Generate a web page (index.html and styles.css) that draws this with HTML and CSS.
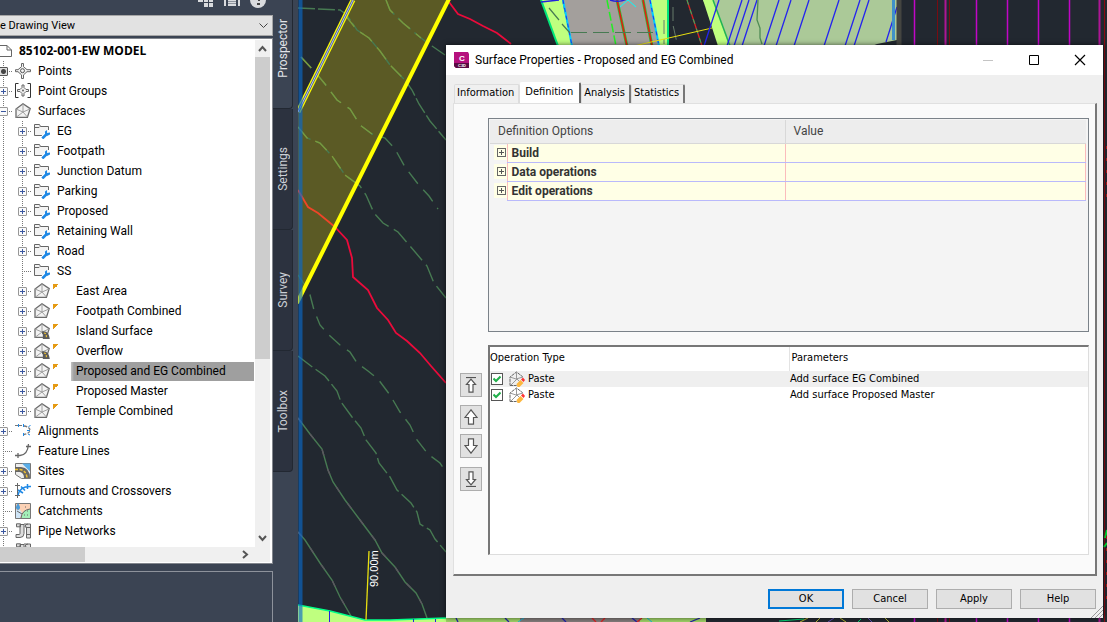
FILE: index.html
```html
<!DOCTYPE html>
<html lang="en">
<head>
<meta charset="utf-8">
<title>Surface Properties - Proposed and EG Combined</title>
<link rel="stylesheet" href="styles.css">
</head>
<body>
<svg class="defs" aria-hidden="true">
  <defs>
    <symbol id="surface" viewBox="0 0 16 16">
      <path d="M8 .8 1 6v8.400h11.400L15.200 5.600z" fill="#f3f3f3" stroke="#6b6b6b" stroke-width="1.300"/>
      <path d="M8 1v8M1 6l7 3 7-3M1.500 14 8 9l4.400 5" fill="none" stroke="#a0a0a0"/>
    </symbol>
    <symbol id="road-surface" viewBox="0 0 16 16">
      <use href="#surface"/>
      <path d="M8 8.500c5-1 7 2 7.800 7.500h-7c0-3 .5-5-.8-5.500z" fill="#5c5c5c"/>
      <path d="M10 10c2 0 2.500 2 2.500 6" fill="none" stroke="#f2c230" stroke-width="1.200" stroke-dasharray="2 1.500"/>
    </symbol>
    <symbol id="folder" viewBox="0 0 16 16">
      <path d="M.5 12.500v-11h5l1 2h8v9z" fill="#f3f3f3"/>
      <path d="M14.500 7V3.500h-8l-1-2h-5v11H8M1 4.500h4l1-1" fill="none" stroke="#666"/>
      <path d="M7.500 15.800 13 10.500" stroke="#fff" stroke-width="4"/>
      <path d="M8.300 15.500 13.200 10.500" stroke="#1e88e5" stroke-width="2.600"/>
      <path d="M11 8.500 13 7v3l3-.5v2L13 13l-2-1.500z" fill="#1e88e5"/>
    </symbol>
    <symbol id="point" viewBox="0 0 16 16">
      <path d="M6.500.5h2v3.200l3.500 3h3.500v2H12l-3.500 3.200v3.600h-2v-3.600L3 8.700H.5v-2H3l3.500-3z" fill="#f2f2f2" stroke="#666"/>
      <circle cx="7.500" cy="7.700" r="2" fill="none" stroke="#555"/>
    </symbol>
    <symbol id="point-group" viewBox="0 0 16 16">
      <path d="M3.500.5h-3v14h3M12.500.5h3v14h-3" fill="none" stroke="#333"/>
      <path d="M7 2h2v2.500l2 2h2.500v2H11l-2 2V13H7v-2.500l-2-2H2.500v-2H5l2-2z" fill="#eee" stroke="#666"/>
      <circle cx="8" cy="7.500" r="1" fill="#666"/>
    </symbol>
    <symbol id="doc" viewBox="0 0 12 12">
      <path d="M-4 .5H7L11.500 5v6.500H-4z" fill="#fff" stroke="#666"/><path d="M7 .5V5h4.500" fill="none" stroke="#666"/>
    </symbol>
    <symbol id="alignment" viewBox="0 0 16 16">
      <path d="M0 2.500h8" stroke="#777" stroke-dasharray="3 1"/>
      <path d="M9 3c8 1 8 7 0 8.500" fill="none" stroke="#777" stroke-width="1.300" stroke-dasharray="3 1.500"/>
      <path d="M3.500 1v3M8.500 1v3M13.500 4l2-2M12 7.500h3M13 11l2 1M8.500 10v3" stroke="#1e88e5"/>
    </symbol>
    <symbol id="feature" viewBox="0 0 16 16">
      <path d="M0 12.500h5C11 12 13 8 13.500 1M3 10v5M11 3.500h5" fill="none" stroke="#666" stroke-width="1.300"/>
    </symbol>
    <symbol id="site" viewBox="0 0 16 16">
      <path d="M.5.5h15v15h-9l-6-4z" fill="#eee" stroke="#777"/><path d="M7 .5h8v8z" fill="#5aaee8"/>
      <path d="M0 4h6q9 1 9 11H9q0-5-4-6H0z" fill="#666"/><path d="M0 6.500h5q6 1 7 8" fill="none" stroke="#f2c230" stroke-width="1.500" stroke-dasharray="3 1.500"/>
    </symbol>
    <symbol id="turnout" viewBox="0 0 16 16">
      <path d="M2.500 0v15M0 2.500h5M0 12.500h5" stroke="#666"/>
      <path d="M3 12Q5 3 16 3.500M3 7l5 3M6 3.500l4 4M12.500 1v5" fill="none" stroke="#1e88e5" stroke-width="1.500"/>
    </symbol>
    <symbol id="catchment" viewBox="0 0 16 16">
      <path d="M.5.5h15v15H.5z" fill="#fbd1b5" stroke="#777"/><path d="M6 15 9 8l6-2v9z" fill="#a3efb8"/>
      <path d="M1 7h4l2 3-2 5H1z" fill="#cfe5f7"/><path d="M6 15q1-8 9-9M2 8l5 3" fill="none" stroke="#666"/>
      <path d="M3 0Q7 6 3 7-1 6 3 0z" fill="#4b9bd8"/><path d="M10 4h1M12 8h1M9 12h1M12 12h1" stroke="#666"/>
    </symbol>
    <symbol id="pipe" viewBox="0 0 16 16">
      <path d="M1.500.8h4v3h-4zM5 1.500h4v9q0 4-4 4H1v-3h3q1 0 1-1zM10 4q0-3 3-3h2.500v14h-4V4z" fill="#ddd" stroke="#666"/>
      <path d="M11 4.500h4M11 11.500h4M9 1h4" stroke="#666"/>
    </symbol>
    <symbol id="edit-surface" viewBox="0 0 16 16">
      <path d="M1 14.500V6l6.500-5L14 6M1 14.500h7" fill="none" stroke="#666" stroke-dasharray="3 .6"/>
      <path d="M7.500 1v7M1 6l6 2 7-2M2 14l6-6 3 3" fill="none" stroke="#999"/>
      <path d="m7.500 13 4-4 3 3-4 4h-2z" fill="#fdb73e"/><path d="m12 8.500 2-2 2 2.500-1.500 2z" fill="#f33"/>
    </symbol>
    <symbol id="arrow-up" viewBox="0 0 14 16">
      <path d="M7 .8 1 8.500h3.500v6.700h5V8.500H13z" fill="#fff" stroke="#555" stroke-width="1.200"/>
    </symbol>
    <symbol id="arrow-top" viewBox="0 0 14 16">
      <path d="M2 .5h10" stroke="#555" stroke-width="1.200"/>
      <path d="M7 2.200 2.500 7.500H5v7.700h4V7.500h2.500z" fill="#fff" stroke="#555" stroke-width="1.200"/>
    </symbol>
  </defs>
</svg>

<main class="app">
  <aside class="palette">
    <div class="palette-main">
      <div class="toolbar">
        <svg width="16" height="8" aria-hidden="true"><path d="M0 0h5v2H0zM6 3h4v4H6zM11 3h4v4h-4zM6 0h4v2H6zM11 0h4v2h-4z" fill="#d9dbde"/></svg>
        <svg width="16" height="8" aria-hidden="true"><path d="M0 6V0h2v6zM14 6V0h2v6zM4 0h8v6H4z" fill="#d9dbde"/><path d="M4 1.500h8M4 3.500h8" stroke="#8d939d"/></svg>
        <svg width="17" height="9" aria-hidden="true"><path d="M0 0a8 8 0 0 0 16 0z" fill="#d9dbde"/><path d="M7 4h3M8 0h2" stroke="#444" stroke-width="2"/></svg>
      </div>
      <select class="view-select" aria-label="View"><option>e Drawing View</option></select>
      <section class="tree-box">
        <div class="tree-row">
          <nav class="tree" aria-label="Drawing items">
            <div class="node root"><svg class="doc"><use href="#doc"/></svg><b>85102-001-EW MODEL</b></div>
            <ul class="branch">
              <li class="node"><button class="exp dot" aria-label="Points"></button><i class="link"></i><svg class="ico"><use href="#point"/></svg><span>Points</span></li>
              <li class="node"><button class="exp" aria-label="Expand"></button><i class="link"></i><svg class="ico"><use href="#point-group"/></svg><span>Point Groups</span></li>
              <li>
                <div class="node"><button class="exp minus" aria-label="Collapse"></button><i class="link"></i><svg class="ico"><use href="#surface"/></svg><span>Surfaces</span></div>
                <ul class="branch sub">
                  <li class="node"><button class="exp" aria-label="Expand"></button><i class="link"></i><svg class="ico"><use href="#folder"/></svg><span>EG</span></li>
                  <li class="node"><button class="exp" aria-label="Expand"></button><i class="link"></i><svg class="ico"><use href="#folder"/></svg><span>Footpath</span></li>
                  <li class="node"><button class="exp" aria-label="Expand"></button><i class="link"></i><svg class="ico"><use href="#folder"/></svg><span>Junction Datum</span></li>
                  <li class="node"><button class="exp" aria-label="Expand"></button><i class="link"></i><svg class="ico"><use href="#folder"/></svg><span>Parking</span></li>
                  <li class="node"><button class="exp" aria-label="Expand"></button><i class="link"></i><svg class="ico"><use href="#folder"/></svg><span>Proposed</span></li>
                  <li class="node"><button class="exp" aria-label="Expand"></button><i class="link"></i><svg class="ico"><use href="#folder"/></svg><span>Retaining Wall</span></li>
                  <li class="node"><button class="exp" aria-label="Expand"></button><i class="link"></i><svg class="ico"><use href="#folder"/></svg><span>Road</span></li>
                  <li class="node"><i class="link leaf"></i><svg class="ico"><use href="#folder"/></svg><span>SS</span></li>
                  <li class="node"><button class="exp" aria-label="Expand"></button><i class="link"></i><svg class="ico"><use href="#surface"/></svg><i class="flag"></i><span>East Area</span></li>
                  <li class="node"><button class="exp" aria-label="Expand"></button><i class="link"></i><svg class="ico"><use href="#surface"/></svg><i class="flag"></i><span>Footpath Combined</span></li>
                  <li class="node"><button class="exp" aria-label="Expand"></button><i class="link"></i><svg class="ico"><use href="#road-surface"/></svg><i class="flag"></i><span>Island Surface</span></li>
                  <li class="node"><button class="exp" aria-label="Expand"></button><i class="link"></i><svg class="ico"><use href="#road-surface"/></svg><i class="flag"></i><span>Overflow</span></li>
                  <li class="node"><button class="exp" aria-label="Expand"></button><i class="link"></i><svg class="ico"><use href="#surface"/></svg><i class="flag"></i><span class="selected">Proposed and EG Combined</span></li>
                  <li class="node"><button class="exp" aria-label="Expand"></button><i class="link"></i><svg class="ico"><use href="#surface"/></svg><i class="flag"></i><span>Proposed Master</span></li>
                  <li class="node"><button class="exp" aria-label="Expand"></button><i class="link"></i><svg class="ico"><use href="#surface"/></svg><i class="flag"></i><span>Temple Combined</span></li>
                </ul>
              </li>
              <li class="node"><button class="exp" aria-label="Expand"></button><i class="link"></i><svg class="ico"><use href="#alignment"/></svg><span>Alignments</span></li>
              <li class="node"><i class="link leaf"></i><svg class="ico"><use href="#feature"/></svg><span>Feature Lines</span></li>
              <li class="node"><button class="exp" aria-label="Expand"></button><i class="link"></i><svg class="ico"><use href="#site"/></svg><span>Sites</span></li>
              <li class="node"><button class="exp" aria-label="Expand"></button><i class="link"></i><svg class="ico"><use href="#turnout"/></svg><span>Turnouts and Crossovers</span></li>
              <li class="node"><i class="link leaf"></i><svg class="ico"><use href="#catchment"/></svg><span>Catchments</span></li>
              <li class="node"><button class="exp" aria-label="Expand"></button><i class="link"></i><svg class="ico"><use href="#pipe"/></svg><span>Pipe Networks</span></li>
              <li class="node"><i class="link leaf"></i><svg class="ico"><use href="#pipe"/></svg></li>
            </ul>
          </nav>
          <div class="vscroll">
            <svg width="15" height="17"><path d="M4 11l3.500-4 3.500 4" fill="none" stroke="#555" stroke-width="2"/></svg>
            <div class="thumb"></div>
            <svg width="15" height="17"><path d="M4 6l3.500 4L11 6" fill="none" stroke="#555" stroke-width="2"/></svg>
          </div>
        </div>
        <div class="hscroll"><div class="thumb"></div><svg width="15" height="15"><path d="M5 4l4 3.500L5 11" fill="none" stroke="#555" stroke-width="2"/></svg></div>
      </section>
      <div class="preview"></div>
    </div>
    <div class="side-tabs">
      <button class="side-tab active"><span>Prospector</span></button>
      <button class="side-tab"><span>Settings</span></button>
      <button class="side-tab"><span>Survey</span></button>
      <button class="side-tab"><span>Toolbox</span></button>
    </div>
  </aside>

  <section class="canvas">
    <svg class="map" viewBox="298 0 809 622" preserveAspectRatio="xMinYMin slice">
      <path d="M353 0h96L298 302V112z" fill="#5b5a25"/>
      <g fill="none" stroke="#477a52" stroke-width="1.400">
        <path stroke-dasharray="17 3" d="M298 8l42 2 7 5 10 15 12 8 11 13 10 14 15 15 7 10 7 14 11 17 16 19"/>
        <path stroke-dasharray="17 5" d="M386 0l4 10 13 13 18 15 11 8 13 9"/>
        <path stroke-dasharray="15 8" d="M301 57l14 15 10 12 12 16 13 9 10 16 12 9 13 4 10 11 10 18 13 17 11 12 9 13"/>
        <path stroke-dasharray="18 6" d="M298 127l9 11 13 5 12 13 13 19 15 11 6 9 8 18 9 10 15 9 12 14 17 20 7 17 12 15"/>
        <path stroke-dasharray="15 8" d="M298 275l11 16 5 19 6 15 8 9 12 11 10 7 7 11 11 8 10 8 12 16 10 17 10 13 7 15 11 14 12 9 6 9"/>
        <path stroke-dasharray="18 4" d="M298 356l13 10 14 10 12 15 4 11 11 15 9 11 5 12 10 13 3 10 11 14 7 13 14 13 6 9 3 12 10 6 5 9 11 13"/>
        <path d="M298 418l12 16 12 15 6 21 5 12 12 18 15 20 15 20 7 13 13 14 10 15 11 11 6 11 5 14M298 532l7 8 15 23 12 17 8 17 11 19"/>
        <path stroke="#5d5660" stroke-dasharray="6 14" d="M298 418l12 16 12 15 6 21 5 12 12 18 15 20 15 20 7 13 13 14 10 15 11 11 6 11M298 532l7 8 15 23 12 17 8 17 11 19"/>
      </g>
      <path d="M298 127l9 11 13 5 12 13 13 19 15 11M301 57l14 15 10 12 12 16 13 9 10 16 12 9M345 15l12 15 12 8 11 13 10 14 15 15M386 0l4 10 13 13 18 15" fill="none" stroke="#7a9a3c" stroke-width="1.400" stroke-dasharray="15 8"/>
      <path d="M335 227l12 13 5 18 1 19 15 13 9 18 11 12 8 13 11 8 13 12 11 13 15 17M449 2l9 12 12 5 13 7 14 7 14 11" fill="none" stroke="#eb0b3b" stroke-width="1.800"/>
      <path d="M298 190l10 17 10 6 17 14" fill="none" stroke="#ef4528" stroke-width="1.800"/>
      <path d="M353 0L298 112" stroke="#ff0" stroke-width="5"/><path d="M353 0L298 112" stroke="#4458a0" stroke-width="2.400"/><path d="M353 0L298 112" stroke="#dfe5ee" stroke-width=".8"/>
      <path d="M449-1L297 303" stroke="#ff0" stroke-width="4"/>
      <path d="M298 605l32 6 35 9 25 0 25-1 31-1h54v4H298z" fill="#bfff7f"/>
      <path d="M298 605l32 6 35 9h25l56-2" fill="none" stroke="#0f8" stroke-width="1.500"/>
      <path d="M329.500 611v11M413.500 619v3M435.500 619v3" stroke="#22d"/>
      <path d="M369 551l-3 69" stroke="#e8df10" stroke-width="1.300"/>
      <text class="dim-label" x="0" y="0" transform="translate(378 587) rotate(-90)">90.00m</text>
      <path d="M300.500 0v622" stroke="#0a68c9" stroke-opacity=".65" stroke-width="4"/>

      <path d="M541 0h21l10 46h-14z" fill="#bfff7f"/><path d="M541 0l17 46" stroke="#00e57a" stroke-width="2"/>
      <path d="M562 0h88l9 46h-87z" fill="#a39f9c"/>
      <path d="M650 0h18l1 46h-10z" fill="#bfff7f"/><path d="M668 0v46" stroke="#00e57a" stroke-width="2"/>
      <path d="M563 0l9 46M650 0l9 46" stroke="#0cf" stroke-width="2"/><path d="M563 0l9 46M650 0l9 46" stroke="#23e" stroke-dasharray="4 4"/>
      <path d="M607 0l9 46" stroke="#2e2" stroke-width="1.500" stroke-dasharray="9 3"/>
      <path d="M617 0l10 46M643 0l9 46" stroke="#3b3" stroke-width="3"/><path d="M617 0l10 46M643 0l9 46" stroke="#e31b12" stroke-width="1.500"/>
      <path d="M541 2l18-2M610 0q9 3 17-1" fill="none" stroke="#22d" stroke-width="1.500"/>
      <path d="M620 7l8-7 8 7" fill="none" stroke="#0ff"/>
      <path d="M549 8l10 12M562 24l8 9M571 32.500h84" stroke="#477a52" stroke-width="1.200" stroke-dasharray="16 6" fill="none"/>
      <path d="M673 7v18l4 18M664 20v24" stroke="#667a6a" stroke-dasharray="14 5" fill="none"/>
      <path d="M687 0l15 46" stroke="#d22" stroke-width="1.300"/><path d="M687 0l15 46" stroke="#2b6" stroke-dasharray="5 5"/>
      <path d="M703 0h194v40l-20 4-5 2H726z" fill="#abc998"/><path d="M703 0h10l16 46h-11z" fill="#bfff7f"/>
      <path d="M713 0l17 46" stroke="#21b553" stroke-width="1.500"/>
      <path d="M634 46l78-18" stroke="#e8df10"/>
      <path d="M719 0l-15 46M742 0l-15 46M749 0l-15 46M757 0l-15 46M779 0l-15 46M791 0l-15 46M809 0l-15 46M839 0l-15 46M860 0l-15 46M869 0l-15 46M897 7l-11 35" stroke="#2424ee" stroke-width="1.300"/>
      <path d="M758 0l-1 20 3 8v10l2 6" fill="none" stroke="#4e8b54" stroke-width="1.300"/>
      <path d="M893.500 0v40" stroke="#3e91c9" stroke-width="3"/><path d="M899 0v46" stroke="#444541" stroke-width="5"/>
      <path d="M914.500 0v622M976.500 0v622M1007.500 0v622M1038.500 0v622M1069.500 0v622" stroke="#c106c7" stroke-width="1.500"/>
      <path d="M945.500 0v622M1099.500 0v622" stroke="#ae1695" stroke-width="2"/>
      <path d="M937.500 0v622M949.500 0v622" stroke="#780c12"/>
      <path d="M1104.500 0v622" stroke="#8b0a11"/>
      <path d="M1107 530l-2 8M1104 547l3-4" stroke="#0d3" stroke-width="2"/>
      <path d="M1106.500 146v60M1106.500 536v70" stroke="#a41818" stroke-dasharray="3 9"/>

      <path d="M446 617h260v5H446z" fill="#9fd267"/><path d="M520 617h120v5H520z" fill="#837c7b"/>
      <path d="M456 618l2 4M505 618l4 4M562 618l4 4M632 618l5 4M690 622l10-4" stroke="#22a" stroke-width="1.300"/>
      <path d="M592 618l4 4M642 618l-5 4M605 618l-4 4" stroke="#d22" stroke-width="1.300"/><path d="M518 622l6-4M652 622l-5-4" stroke="#1bd"/>
      <path d="M779 621l25-2M858 622l3-3" stroke="#0d7"/><path d="M800 622l8-4M816 622l4-4M840 618l6 4M885 618l4 4" stroke="#bb3"/><path d="M828 622l6-4M868 618l4 4" stroke="#65b"/>
    </svg>

    <section class="dialog" role="dialog" aria-label="Surface Properties">
      <header class="titlebar">
        <svg class="logo" viewBox="0 0 15 16"><path d="M0 0h14l1 2v14H2L0 14z" fill="#b5117d"/><path d="M0 11h15v5H2l-2-2z" fill="#5a0b43"/><text x="5" y="9" class="logo-c">C</text><text x="4" y="15" class="logo-s">C3D</text></svg>
        <h1>Surface Properties - Proposed and EG Combined</h1>
        <div class="win-buttons">
          <button aria-label="Minimize"><svg width="12" height="12"><path d="M1 6.500h10" stroke="#c4c4c4"/></svg></button>
          <button aria-label="Maximize"><svg width="12" height="12"><path d="M1.500 1.500h9v9h-9z" fill="none" stroke="#000"/></svg></button>
          <button aria-label="Close"><svg width="12" height="12"><path d="M1 1l10 10M11 1L1 11" stroke="#000" stroke-width="1.200"/></svg></button>
        </div>
      </header>
      <div class="tabs" role="tablist">
        <button class="tab" role="tab">Information</button>
        <button class="tab current" role="tab" aria-selected="true">Definition</button>
        <button class="tab" role="tab">Analysis</button>
        <button class="tab" role="tab">Statistics</button>
      </div>
      <div class="pane">
        <div class="options">
          <table>
            <colgroup><col class="c-exp"><col class="c-name"><col></colgroup>
            <thead><tr><th colspan="2" class="first">Definition Options</th><th>Value</th></tr></thead>
            <tbody>
              <tr><td class="toggle"><button class="plus" aria-label="Expand Build"></button></td><th scope="row">Build</th><td class="val"></td></tr>
              <tr><td class="toggle"><button class="plus" aria-label="Expand Data operations"></button></td><th scope="row">Data operations</th><td class="val"></td></tr>
              <tr><td class="toggle"><button class="plus" aria-label="Expand Edit operations"></button></td><th scope="row">Edit operations</th><td class="val"></td></tr>
            </tbody>
          </table>
        </div>
        <div class="ops">
          <div class="movers">
            <button aria-label="Move to top"><svg width="14" height="16"><use href="#arrow-top"/></svg></button>
            <button aria-label="Move up"><svg width="14" height="16"><use href="#arrow-up"/></svg></button>
            <button class="near" aria-label="Move down"><svg class="flip" width="14" height="16"><use href="#arrow-up"/></svg></button>
            <button aria-label="Move to bottom"><svg class="flip" width="14" height="16"><use href="#arrow-top"/></svg></button>
          </div>
          <div class="op-list">
            <table>
              <thead><tr><th>Operation Type</th><th>Parameters</th></tr></thead>
              <tbody>
                <tr class="striped"><td><label><input type="checkbox" checked><svg width="16" height="16"><use href="#edit-surface"/></svg>Paste</label></td><td>Add surface EG Combined</td></tr>
                <tr><td><label><input type="checkbox" checked><svg width="16" height="16"><use href="#edit-surface"/></svg>Paste</label></td><td>Add surface Proposed Master</td></tr>
              </tbody>
            </table>
          </div>
        </div>
      </div>
      <footer class="actions">
        <button class="primary">OK</button><button>Cancel</button><button>Apply</button><button>Help</button>
        <svg class="grip" width="12" height="12"><path d="M0 12L12 0M4 12l8-8M8 12l4-4" stroke="#999"/></svg>
      </footer>
    </section>
  </section>
</main>
</body>
</html>
```
FILE: styles.css
```css
* { box-sizing: border-box; }
body { margin: 0; background: #3b4453; color: #000; font: 12px/20px Roboto, "Noto Sans", sans-serif; }
button { font: inherit; color: inherit; padding: 0; border: 0; background: none; }
svg { display: block; flex: none; }
ul { list-style: none; margin: 0; padding: 0; }
.defs { position: absolute; width: 0; height: 0; }
.app { display: flex; height: 100vh; overflow: hidden; }

/* palette */
.palette { flex: none; width: 298px; display: flex; background: #3b4453; }
.palette-main { width: 273px; display: flex; flex-direction: column; }
.toolbar { display: flex; gap: 10px; height: 15px; padding-left: 198px; }
.view-select {
  appearance: none; height: 21px; width: 100%; padding: 0; border: 1px solid #a6a6a6; border-left: 0; border-radius: 0;
  font: 11px/19px Roboto, "Liberation Sans", sans-serif; color: #000;
  background: url("data:image/svg+xml,%3Csvg xmlns='http://www.w3.org/2000/svg' width='9' height='6'%3E%3Cpath d='M.5.5l4 4 4-4' fill='none' stroke='%23444'/%3E%3C/svg%3E") right 4px center no-repeat #e2e2e2;
}
.tree-box { flex: 1; min-height: 0; margin-top: 2px; display: flex; flex-direction: column; background: #fff; border: 1px solid #82868d; border-left: 0; padding: 1px 2px 1px 0; }
.tree-row { flex: 1; min-height: 0; display: flex; }
.tree { flex: 1; min-width: 0; padding-top: 1px; overflow: hidden; white-space: nowrap; }
.node { display: flex; align-items: center; height: 20px; }
.root { gap: 7px; font-family: "Open Sans", "Noto Sans", sans-serif; }
.doc { width: 12px; height: 12px; }
.branch { background: repeating-linear-gradient(#777 0 1px, #fff 1px 2px) 3px 0 / 1px 100% no-repeat; }
.branch > li.node, .branch > li > div.node { margin-left: -1px; }
.sub { background-position: 22px 0; background-size: 1px calc(100% - 10px); }
.branch.sub > li.node { margin-left: 18px; }
.exp { width: 9px; height: 9px; flex: none; border: 1px solid #979797; border-radius: 1px;
  background: linear-gradient(#3a57a0, #3a57a0) center / 5px 1px no-repeat, linear-gradient(#3a57a0, #3a57a0) center / 1px 5px no-repeat, #fafafa; }
.exp.minus { background: linear-gradient(#3a57a0, #3a57a0) center / 5px 1px no-repeat, #fafafa; }
.exp.dot { background: radial-gradient(#444 2px, #ddd 3px); border-color: #555; }
.link { width: 4px; height: 1px; margin: 0 2px 0 1px; background: repeating-linear-gradient(90deg, #777 0 1px, #fff 1px 2px); }
.link.leaf { width: 8px; margin-left: 6px; }
.ico { width: 16px; height: 16px; margin-right: 6px; }
.node > span { padding: 0 1px; }
.flag { width: 6px; height: 6px; margin: 0 16px 9px -3px; background: linear-gradient(135deg, #e59a13 50%, transparent 50%); }
.node > .selected { flex: 1; height: 19px; line-height: 19px; background: linear-gradient(90deg, #c4c4c4, #9f9f9f 3px); margin: 0 1px 0 -4px; padding-left: 5px; }
.vscroll { width: 15px; display: flex; flex-direction: column; background: #f0f0f0; }
.vscroll .thumb { height: 302px; background: #cdcdcd; }
.vscroll svg:last-child { margin-top: auto; }
.hscroll { height: 15px; display: flex; justify-content: space-between; padding-right: 17px; background: #f0f0f0; }
.hscroll .thumb { width: 85px; background: #cdcdcd; }
.preview { flex: none; height: 51px; margin-top: 7px; border: 1px solid #8d929b; border-width: 1px 1px 0 0; }
.side-tabs { width: 20px; }
.side-tab { display: flex; align-items: center; justify-content: center; width: 20px; height: 121px; color: #ccd0d6; background: #2c323f; border: 1px solid #222832; border-width: 0 1px 1px 0; border-radius: 0 0 4px 0; }
.side-tab.active { height: 109px; padding-bottom: 12px; background: #3b4453; color: #e2e4e8; }
.side-tab span { writing-mode: vertical-rl; transform: rotate(180deg); }

/* drawing */
.canvas { flex: 1; min-width: 0; position: relative; background: #222830; overflow: hidden; }
.map { width: 100%; height: 100%; }
.dim-label { font: 11px "Liberation Sans", sans-serif; fill: #fff; }

/* dialog */
.dialog { position: absolute; left: 148px; right: 4px; top: 45px; bottom: 4px; display: flex; flex-direction: column; background: #efefef; box-shadow: 0 0 5px #0009; font: 11px/16px "DejaVu Sans Condensed", "Liberation Sans", sans-serif; }
.titlebar { flex: none; height: 30px; display: flex; align-items: center; padding-left: 8px; background: #fff; }
.logo { width: 15px; height: 16px; }
.logo-c { font: bold 8px "Liberation Sans", sans-serif; fill: #fff; }
.logo-s { font: bold 4px "Liberation Sans", sans-serif; fill: #fff; }
.titlebar h1 { flex: 1; margin: 0 0 0 6px; font: 12px/20px Roboto, "Noto Sans", sans-serif; }
.win-buttons { display: flex; }
.win-buttons button { width: 46px; height: 30px; display: flex; align-items: center; justify-content: center; }
.tabs { display: flex; align-items: flex-end; height: 28px; padding-left: 8px; }
.tab { height: 19px; padding: 0 4px 2px 2px; border: 1px solid #ddd; border-bottom: 0; border-right: 2px solid #777; border-radius: 2px 2px 0 0; background: #f0f0f0; }
.tab:first-child { border-right-color: #ddd; }
.tab.current { height: 21px; padding: 0 6px 2px 4px; background: #fff; border-color: #fff #666 #fff #fff; }
.pane { flex: 1; min-height: 0; margin: 0 6px 0 7px; padding: 14px 6px 19px 6px; display: flex; flex-direction: column; gap: 13px; background: #fafafa; border: 1px solid #e0e0e0; border-right: 2px solid #777; border-bottom: 2px solid #777; }
.options { flex: 1; min-height: 0; margin-left: 28px; border: 1px solid #7b8289; padding: 1px 2px 0 1px; background: #f4f4f4; }
table { width: 100%; border-collapse: collapse; table-layout: fixed; }
th, td { padding: 0; text-align: left; font-weight: normal; }
.options table { font: 12px/18px Roboto, "Noto Sans", sans-serif; color: #444; }
.c-exp { width: 17px; }
.c-name { width: 278px; }
.options thead th { height: 23px; padding-left: 8px; background: #ededed; border-bottom: 1px solid #d8d8d8; border-left: 1px solid #d8d8d8; }
.options thead .first { border-left: 0; }
.options tbody th, .options .val { height: 19px; border-bottom: 1px solid #b9b9fb; border-left: 1px solid #fbbcbc; background: #ffffe6; }
.options .val { border-right: 1px solid #fbbcbc; }
.options tbody th { padding-left: 4px; font-weight: bold; color: #333; }
.toggle { padding-left: 4px; }
.plus { display: block; width: 9px; height: 9px; margin-left: 3px; border: 1px solid #666; background: linear-gradient(#555, #555) center / 5px 1px no-repeat, linear-gradient(#555, #555) center / 1px 5px no-repeat, #ffffe6; box-shadow: 0 0 0 3px #ffffe6; }
.ops { flex: 1; min-height: 0; display: flex; gap: 6px; }
.movers { width: 22px; display: flex; flex-direction: column; gap: 8px; padding-top: 28px; }
.movers button { display: flex; align-items: center; justify-content: center; width: 22px; height: 24px; border: 1px solid #adadad; background: #e1e1e1; }
.movers .near { margin: -3px 0 1px; }
.flip { transform: rotate(180deg); }
.op-list { flex: 1; border: 1px solid #ddd; border-top: 2px solid #777; border-left: 2px solid #777; background: #fff; }
.op-list thead th { height: 24px; padding-bottom: 1px; }
.op-list thead th + th { padding-left: 2px; border-left: 1px solid #e3e3e3; }
.op-list td { height: 16px; padding: 0; }
.op-list td + td { padding-left: 1px; }
.striped { background: #efefef; }
.op-list label { display: flex; align-items: center; height: 16px; }
.op-list label svg { margin: 0 3px 0 6px; }
.op-list input { appearance: none; width: 12px; height: 12px; margin: 0 0 0 1px; border: 1px solid #555; background: url("data:image/svg+xml,%3Csvg xmlns='http://www.w3.org/2000/svg' width='8' height='8'%3E%3Cpath d='M.5 3.5l2.5 2.5 4.5-4.5' fill='none' stroke='%2322b04c' stroke-width='2'/%3E%3C/svg%3E") center no-repeat #fff; }
.actions { flex: none; position: relative; display: flex; justify-content: flex-end; gap: 8px; padding: 13px 7px 9px; }
.actions button { width: 76px; height: 20px; border: 1px solid #adadad; background: #e1e1e1; }
.actions .primary { border: 2px solid #0078d7; }
.grip { position: absolute; right: 0; bottom: 0; }
```
